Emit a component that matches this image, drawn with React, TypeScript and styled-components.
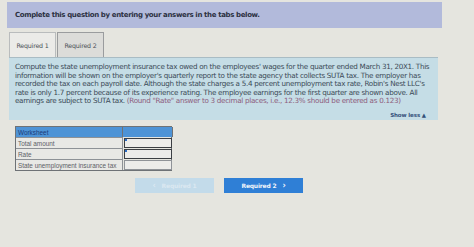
import React from "react";
import styled, { createGlobalStyle } from "styled-components";

const GlobalStyle = createGlobalStyle`
  html, body { margin: 0; padding: 0; }
  body {
    background: #e5e5df;
    font-family: "DejaVu Sans", Verdana, sans-serif;
    width: 474px;
    height: 247px;
    overflow: hidden;
  }
`;

const Page = styled.div`
  display: flex;
  flex-direction: column;
  padding: 2px 0 0 7px;
`;

const Header = styled.div`
  width: 427px;
  height: 26px;
  background: #b2badb;
  display: flex;
  align-items: center;
  padding-left: 8px;
  font-weight: bold;
  font-size: 7px;
  letter-spacing: -0.36px;
  color: #2c3142;
`;

const Content = styled.div`
  display: flex;
  flex-direction: column;
  padding-left: 2px;
`;

const Tabs = styled.div`
  display: flex;
  margin-top: 4px;
`;

const Tab = styled.div<{ $active?: boolean }>`
  width: 47px;
  height: 25px;
  box-sizing: border-box;
  border: 1px solid ${(p) => (p.$active ? "#b9bcbd" : "#9a9c9e")};
  border-bottom: none;
  background: ${(p) => (p.$active ? "#ebebe8" : "#dcdcd9")};
  display: flex;
  align-items: center;
  justify-content: center;
  font-size: 6.3px;
  letter-spacing: -0.2px;
  color: #4a4f55;
  margin-right: 1px;
`;

const Panel = styled.div`
  width: 429px;
  height: 63px;
  box-sizing: border-box;
  background: #c5dde6;
  border-top: 1px solid #a9bcc4;
  padding: 5px 0 0 6px;
  display: flex;
  flex-direction: column;
  color: #3b4a56;
  font-size: 7.2px;
  letter-spacing: -0.3px;
  line-height: 8.5px;
`;

const Line = styled.div`
  white-space: nowrap;
`;

const Note = styled.span`
  color: #8d5c7c;
`;

const ShowLess = styled.div`
  align-self: flex-end;
  margin: 5px 12px 0 0;
  font-size: 5.5px;
  font-weight: bold;
  color: #33507a;
  letter-spacing: -0.1px;
`;

const Table = styled.div`
  display: grid;
  grid-template-columns: 107px 50px;
  margin: 6px 0 0 6px;
  width: 157px;
  box-sizing: border-box;
  border: 1px solid #6e7276;
  font-family: "Liberation Sans", Arial, sans-serif;
  font-size: 6.4px;
`;

const HeadCell = styled.div`
  height: 10px;
  background: #4d93d6;
  color: #1c3a78;
  display: flex;
  align-items: center;
  padding-left: 2px;
  border-right: 1px solid #6e7276;
  &:last-child { border-right: none; }
`;

const LabelCell = styled.div`
  height: 10px;
  border-top: 1px solid #8d9196;
  border-right: 1px solid #8d9196;
  background: #e8e8e5;
  color: #5d6166;
  display: flex;
  align-items: center;
  padding-left: 2px;
  white-space: nowrap;
`;

const InputCell = styled.div<{ $strong?: boolean }>`
  position: relative;
  height: 10px;
  box-sizing: border-box;
  border: 1px solid ${(p) => (p.$strong ? "#3b3f44" : "#8f9398")};
  margin: 1px 1px 0 1px;
  background: #ececea;
  &::before {
    content: "";
    display: ${(p) => (p.$strong ? "block" : "none")};
    position: absolute;
    left: 0;
    top: 0;
    width: 2px;
    height: 2px;
    background: #2b6cc4;
  }
`;

const Buttons = styled.div`
  display: flex;
  gap: 10px;
  margin: 7px 0 0 126px;
`;

const NavButton = styled.div<{ $primary?: boolean }>`
  width: 79px;
  height: 15px;
  background: ${(p) => (p.$primary ? "#2f7fd6" : "#c3dbea")};
  color: ${(p) => (p.$primary ? "#f2f6fb" : "#dbe8f1")};
  font-size: 6px;
  font-weight: bold;
  letter-spacing: -0.2px;
  display: flex;
  align-items: center;
  justify-content: center;
  gap: 6px;
`;

const Chevron = styled.span`
  font-size: 8px;
  line-height: 1;
`;

export default function App() {
  return (
    <>
      <GlobalStyle />
      <Page>
        <Header>Complete this question by entering your answers in the tabs below.</Header>
        <Content>
          <Tabs>
            <Tab $active>Required 1</Tab>
            <Tab>Required 2</Tab>
          </Tabs>
          <Panel>
            <Line>Compute the state unemployment insurance tax owed on the employees' wages for the quarter ended March 31, 20X1. This</Line>
            <Line>information will be shown on the employer's quarterly report to the state agency that collects SUTA tax. The employer has</Line>
            <Line>recorded the tax on each payroll date. Although the state charges a 5.4 percent unemployment tax rate, Robin's Nest LLC's</Line>
            <Line>rate is only 1.7 percent because of its experience rating. The employee earnings for the first quarter are shown above. All</Line>
            <Line>
              earnings are subject to SUTA tax. <Note>(Round "Rate" answer to 3 decimal places, i.e., 12.3% should be entered as 0.123)</Note>
            </Line>
            <ShowLess>Show less ▲</ShowLess>
          </Panel>
          <Table>
            <HeadCell>Worksheet</HeadCell>
            <HeadCell />
            <LabelCell>Total amount</LabelCell>
            <InputCell $strong />
            <LabelCell>Rate</LabelCell>
            <InputCell $strong />
            <LabelCell>State unemployment insurance tax</LabelCell>
            <InputCell />
          </Table>
          <Buttons>
            <NavButton>
              <Chevron>‹</Chevron>Required 1
            </NavButton>
            <NavButton $primary>
              Required 2<Chevron>›</Chevron>
            </NavButton>
          </Buttons>
        </Content>
      </Page>
    </>
  );
}
